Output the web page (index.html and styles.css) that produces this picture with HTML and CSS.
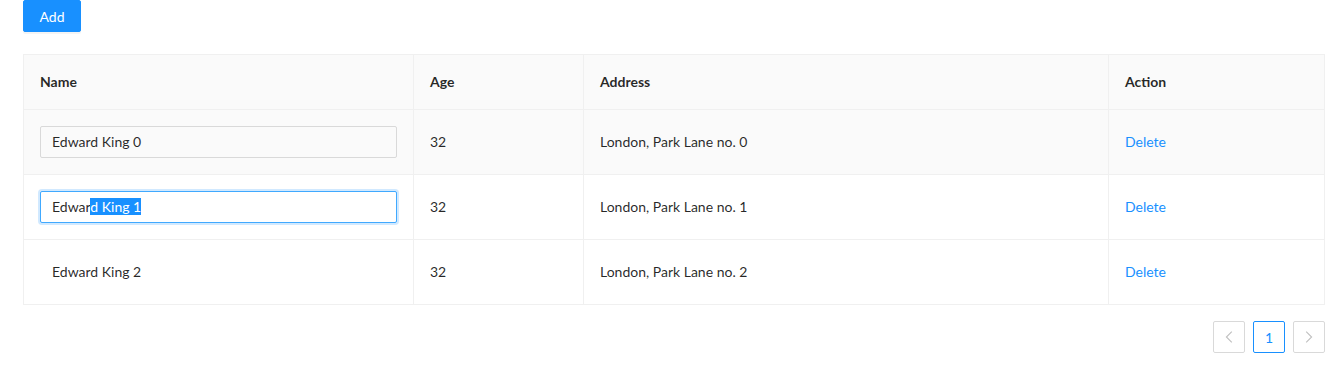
FILE: index.html
```html
<!DOCTYPE html>
<html>
<head>
<meta charset="utf-8">
<link rel="stylesheet" href="styles.css">
</head>
<body>
<div class="page">
  <button class="btn-primary">Add</button>
  <div class="table">
    <div class="row head">
      <div class="cell c-name">Name</div>
      <div class="cell c-age">Age</div>
      <div class="cell c-addr">Address</div>
      <div class="cell c-act">Action</div>
    </div>
    <div class="row hover">
      <div class="cell c-name"><div class="input">Edward King 0</div></div>
      <div class="cell c-age">32</div>
      <div class="cell c-addr">London, Park Lane no. 0</div>
      <div class="cell c-act"><a class="link">Delete</a></div>
    </div>
    <div class="row">
      <div class="cell c-name"><div class="input focus">Edwar<span class="sel">d King 1</span></div></div>
      <div class="cell c-age">32</div>
      <div class="cell c-addr">London, Park Lane no. 1</div>
      <div class="cell c-act"><a class="link">Delete</a></div>
    </div>
    <div class="row last">
      <div class="cell c-name"><div class="plain">Edward King 2</div></div>
      <div class="cell c-age">32</div>
      <div class="cell c-addr">London, Park Lane no. 2</div>
      <div class="cell c-act"><a class="link">Delete</a></div>
    </div>
  </div>
  <div class="pager">
    <div class="pg disabled"><svg width="12" height="12" viewBox="0 0 12 12"><path d="M8.8 0.6 L3.4 6 L8.8 11.4" fill="none" stroke="currentColor" stroke-width="1.1"/></svg></div>
    <div class="pg active">1</div>
    <div class="pg disabled"><svg width="12" height="12" viewBox="0 0 12 12"><path d="M3.2 0.6 L8.6 6 L3.2 11.4" fill="none" stroke="currentColor" stroke-width="1.1"/></svg></div>
  </div>
</div>
</body>
</html>
```
FILE: styles.css
```css
* { box-sizing: border-box; }
html, body { margin: 0; padding: 0; background: #fff; }
body {
  font-family: Lato, "Noto Sans", sans-serif;
  font-size: 14px;
  color: rgba(0,0,0,0.85);
}
.page { padding: 0 8px 0 23px; }
.btn-primary {
  display: block;
  height: 32px;
  width: 58px;
  border: 1px solid #1890ff;
  background: #1890ff;
  color: #fff;
  font-family: inherit;
  font-size: 14px;
  border-radius: 2px;
  padding: 0;
  box-shadow: 0 2px 0 rgba(0,0,0,0.045);
  margin-bottom: 22px;
}
.table {
  width: 1302px;
  border: 1px solid #f0f0f0;
  border-bottom: none;
}
.row {
  display: grid;
  grid-template-columns: 390px 170px 525px 1fr;
  border-bottom: 1px solid #f0f0f0;
  height: 65px;
}
.row.head { height: 55px; background: #fafafa; font-weight: 700; }
.row.hover { background: #fafafa; }
.cell {
  padding: 0 16px;
  display: flex;
  align-items: center;
  border-right: 1px solid #f0f0f0;
  line-height: 22px;
}
.cell.c-act { border-right: none; }
.input {
  width: 100%;
  height: 32px;
  border: 1px solid #d9d9d9;
  border-radius: 2px;
  padding: 4px 11px;
  line-height: 22px;
  background: transparent;
}
.input.focus {
  border-color: #40a9ff;
  box-shadow: 0 0 0 2px rgba(24,144,255,0.2);
  background: #fff;
}
.sel { background: #1890ff; color: #fff; }
.plain { padding: 5px 12px; }
.link { color: #1890ff; }
.pager {
  display: flex;
  justify-content: flex-end;
  gap: 8px;
  width: 1302px;
  margin-top: 16px;
}
.pg {
  width: 32px;
  height: 32px;
  border: 1px solid #d9d9d9;
  border-radius: 2px;
  display: flex;
  align-items: center;
  justify-content: center;
  color: rgba(0,0,0,0.25);
  background: #fff;
}
.pg.active { border-color: #1890ff; color: #1890ff; }
```
